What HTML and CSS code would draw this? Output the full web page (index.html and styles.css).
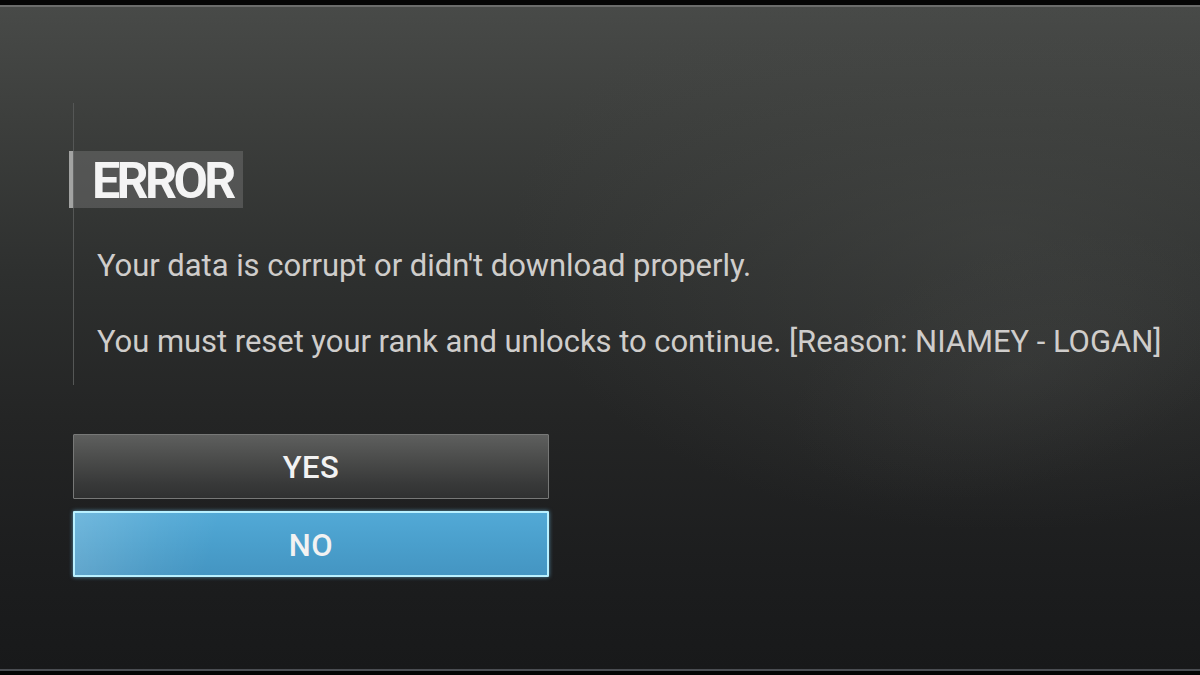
FILE: index.html
```html
<!DOCTYPE html>
<html lang="en">
<head>
<meta charset="utf-8">
<title>Error</title>
<link rel="stylesheet" href="styles.css">
</head>
<body>
<div class="screen">
  <div class="panel">
    <div class="glow"></div>
    <section class="dialog">
      <h1 class="title"><span class="title-text">ERROR</span></h1>
      <p class="msg msg-first">Your data is corrupt or didn't download properly.</p>
      <p class="msg">You must reset your rank and unlocks to continue. [Reason: NIAMEY - LOGAN]</p>
    </section>
    <div class="buttons">
      <button class="btn btn-yes">YES</button>
      <button class="btn btn-no">NO</button>
    </div>
  </div>
</div>
</body>
</html>
```

FILE: styles.css
```css
html, body {
  margin: 0;
  padding: 0;
  width: 1200px;
  height: 675px;
  overflow: hidden;
  background: #000;
}

.screen {
  width: 1200px;
  height: 675px;
  box-sizing: border-box;
  padding-top: 5px;
  padding-bottom: 4px;
  background: #050505;
  font-family: Roboto, "Liberation Sans", sans-serif;
}

.panel {
  position: relative;
  height: 100%;
  box-sizing: border-box;
  border-top: 2px solid #6b6c6b;
  border-bottom: 2px solid #4a4d52;
  padding-left: 73px;
  padding-top: 96px;
  background:
    radial-gradient(ellipse 700px 420px at 1000px 230px, rgba(70, 72, 70, 0.5), rgba(70, 72, 70, 0) 70%),
    linear-gradient(180deg, #484a48 0%, #3c3e3c 18%, #2e302f 40%, #242525 62%, #1c1d1e 85%, #18191a 100%);
  overflow: hidden;
}

.glow {
  position: absolute;
  left: 760px;
  top: 230px;
  width: 520px;
  height: 260px;
  background: radial-gradient(ellipse at center, rgba(90, 92, 90, 0.14), rgba(90, 92, 90, 0) 65%);
  transform: rotate(-18deg);
  pointer-events: none;
}

.dialog {
  position: relative;
  height: 282px;
  box-sizing: border-box;
  border-left: 1px solid #555756;
  padding-top: 48px;
}

.title {
  display: inline-flex;
  margin: 0 0 0 -5px;
  height: 57px;
  align-items: center;
  box-sizing: border-box;
  border-left: 4px solid #a2a3a2;
  background: rgba(120, 120, 120, 0.45);
  padding: 0 10px 0 19px;
}

.title-text {
  font-family: Roboto, "Liberation Sans", sans-serif;
  font-weight: 700;
  font-size: 50px;
  letter-spacing: -3.6px;
  color: #f4f4f4;
  line-height: 1;
  padding-top: 3px;
}

.msg {
  margin: 0;
  padding-left: 23px;
  font-size: 31px;
  line-height: 36px;
  color: #cfcdcb;
  letter-spacing: -0.05px;
  white-space: nowrap;
}

.msg-first {
  margin-top: 40px;
  margin-bottom: 40px;
}

.buttons {
  display: flex;
  flex-direction: column;
  gap: 12px;
  width: 476px;
  margin-top: 49px;
}

.btn {
  height: 65px;
  box-sizing: border-box;
  font-family: Roboto, "Liberation Sans", sans-serif;
  font-size: 31px;
  font-weight: 500;
  color: #f2f2f2;
  letter-spacing: 0.5px;
  padding: 2px 0 0 0;
  border-radius: 1px;
  cursor: pointer;
}

.btn-yes {
  border: 1px solid #777877;
  background: linear-gradient(180deg, #5e5f5e 0%, #4a4b4a 40%, #393a3a 75%, #303131 100%);
}

.btn-no {
  height: 66px;
  border: 2px solid #b8f0ff;
  background:
    linear-gradient(105deg, rgba(255, 255, 255, 0.18) 0%, rgba(255, 255, 255, 0.06) 18%, rgba(255, 255, 255, 0) 30%),
    linear-gradient(180deg, #52a9d6 0%, #4a9fcc 50%, #4495c2 100%);
  box-shadow: 0 0 4px rgba(120, 210, 255, 0.6);
}
```
